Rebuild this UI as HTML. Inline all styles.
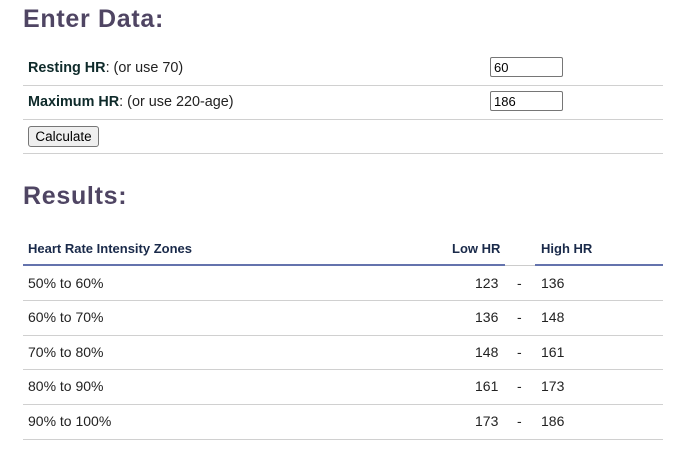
<!DOCTYPE html>
<html><head><style>
body{margin:0;width:679px;height:457px;background:#fff;font-family:"Liberation Sans",Arial,sans-serif;font-size:14px;color:#222;position:relative;overflow:hidden}
.a{position:absolute}
h2{position:absolute;margin:0;font-size:25px;font-weight:bold;color:#4f4563;letter-spacing:0.7px}
.hl{position:absolute;left:23px;width:640px;height:1px;background:#d0d0d0}
.lbl{position:absolute;left:28px;font-size:14.4px}
.lbl b{color:#0e2a2a}
input{position:absolute;left:490px;width:65px;height:16px;border:1px solid #767676;padding:1px 3px;font:13px "Liberation Sans",Arial,sans-serif;border-radius:2px}
button{position:absolute;left:28px;top:126px;height:21px;width:71px;padding:0;font:13.5px "Liberation Sans",Arial,sans-serif;background:#efefef;border:1px solid #767676;border-radius:3px}
.th{position:absolute;top:241px;font-weight:bold;font-size:13px;color:#1a2a4a}
.c{position:absolute;font-size:14px}
</style></head><body>
<h2 style="left:23px;top:5px">Enter Data:</h2>
<div class="lbl" style="top:60px"><b>Resting HR</b>: (or use 70)</div>
<input style="top:57px" value="60">
<div class="hl" style="top:85px"></div>
<div class="lbl" style="top:94px"><b>Maximum HR</b>: (or use 220-age)</div>
<input style="top:91px" value="186">
<div class="hl" style="top:119px"></div>
<button>Calculate</button>
<div class="hl" style="top:153px"></div>
<h2 style="left:23px;top:182px">Results:</h2>
<div class="th" style="left:28px">Heart Rate Intensity Zones</div>
<div class="th" style="left:452px">Low HR</div>
<div class="th" style="left:541px">High HR</div>
<div class="a" style="left:23px;top:264px;width:482px;height:2px;background:#6473ad"></div>
<div class="a" style="left:505px;top:265px;width:30px;height:1px;background:#ccc"></div>
<div class="a" style="left:535px;top:264px;width:128px;height:2px;background:#6473ad"></div>

<div class="c" style="left:28px;top:275px">50% to 60%</div><div class="c" style="left:475px;top:275px">123</div><div class="c" style="left:517px;top:275px">-</div><div class="c" style="left:541px;top:275px">136</div>
<div class="hl" style="top:300px"></div>
<div class="c" style="left:28px;top:309px">60% to 70%</div><div class="c" style="left:475px;top:309px">136</div><div class="c" style="left:517px;top:309px">-</div><div class="c" style="left:541px;top:309px">148</div>
<div class="hl" style="top:335px"></div>
<div class="c" style="left:28px;top:344px">70% to 80%</div><div class="c" style="left:475px;top:344px">148</div><div class="c" style="left:517px;top:344px">-</div><div class="c" style="left:541px;top:344px">161</div>
<div class="hl" style="top:369px"></div>
<div class="c" style="left:28px;top:378px">80% to 90%</div><div class="c" style="left:475px;top:378px">161</div><div class="c" style="left:517px;top:378px">-</div><div class="c" style="left:541px;top:378px">173</div>
<div class="hl" style="top:404px"></div>
<div class="c" style="left:28px;top:413px">90% to 100%</div><div class="c" style="left:475px;top:413px">173</div><div class="c" style="left:517px;top:413px">-</div><div class="c" style="left:541px;top:413px">186</div>
<div class="hl" style="top:439px"></div>
</body></html>
